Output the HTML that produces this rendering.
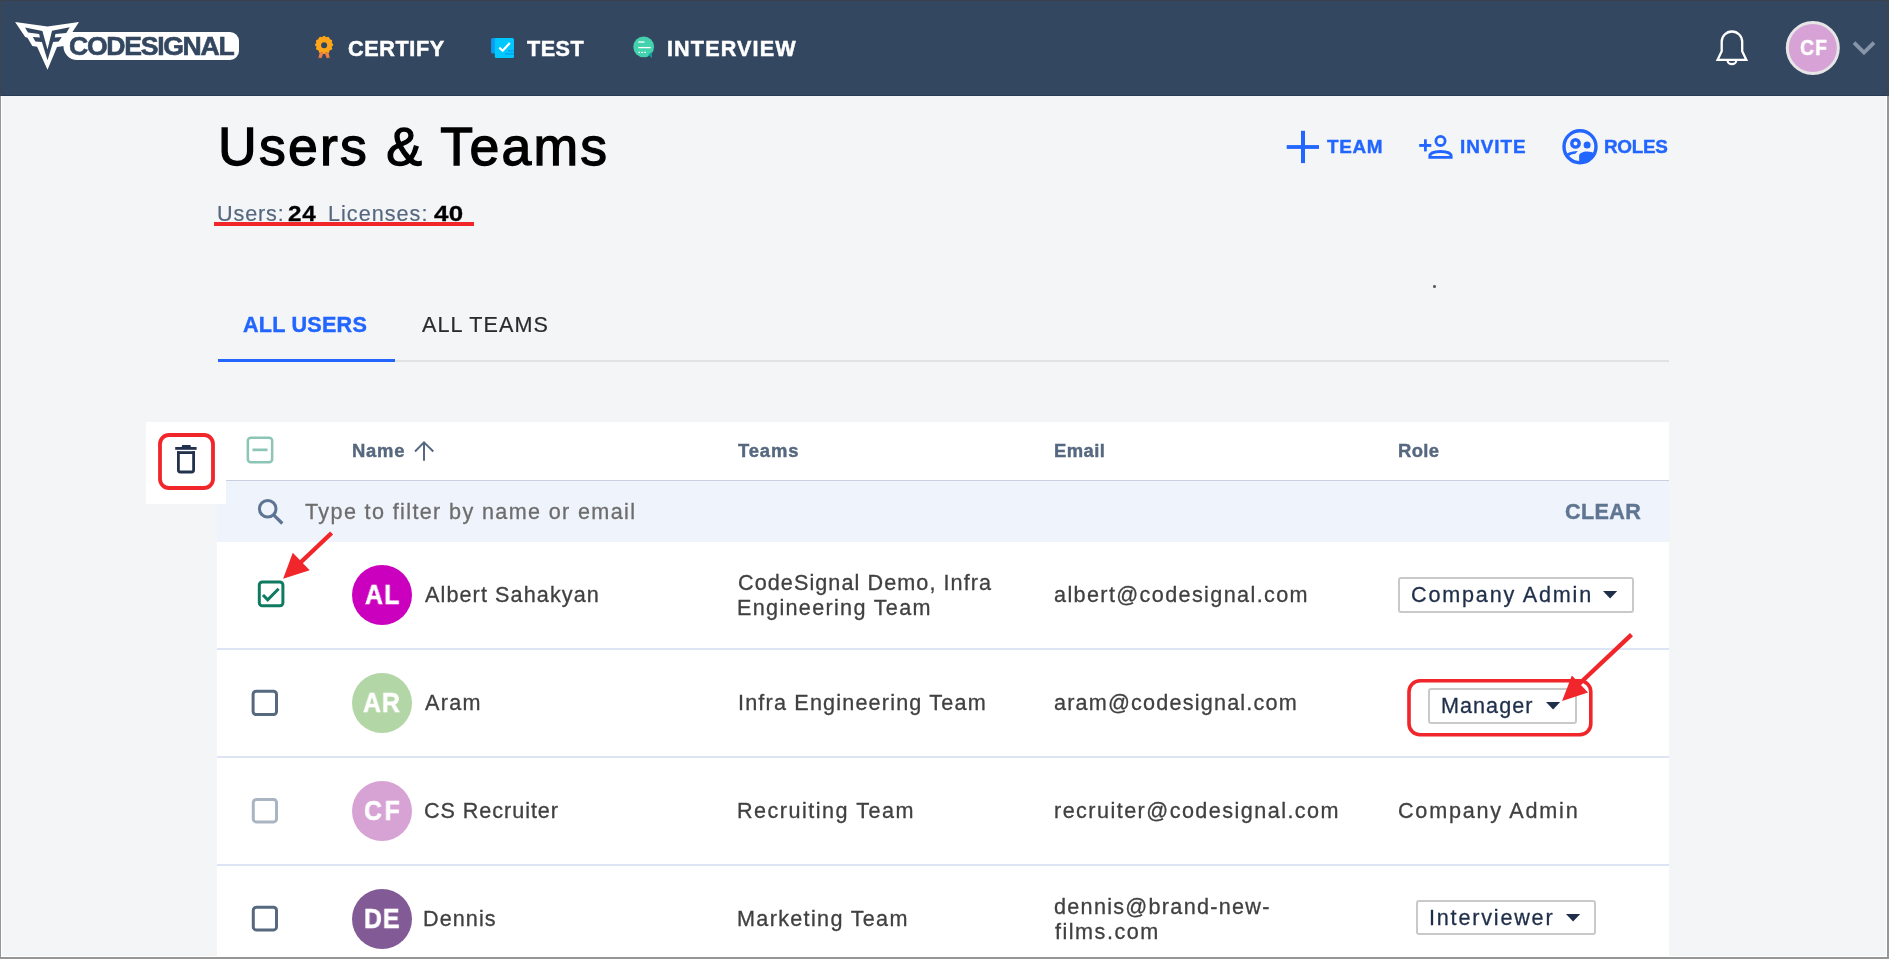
<!DOCTYPE html>
<html><head><meta charset="utf-8">
<style>
html,body{margin:0;padding:0;}
body{width:1889px;height:959px;position:relative;overflow:hidden;background:#f4f5f7;font-family:"Liberation Sans",sans-serif;}
.a{position:absolute;}
.t{position:absolute;white-space:nowrap;line-height:1;-webkit-font-smoothing:antialiased;will-change:transform;}
svg{position:absolute;overflow:visible;}
</style></head>
<body>
<div class="a" style="left:0px;top:0px;width:1889px;height:95px;background:#334760;"></div>
<div class="a" style="left:0px;top:95px;width:1889px;height:1px;background:#2a3c55;"></div>
<div class="a" style="left:0px;top:0px;width:1889px;height:1px;background:#3a424d;"></div>
<svg style="left:0;top:0" width="260" height="96" viewBox="0 0 260 96">
<path d="M68,32 L230,32 A9,9 0 0 1 239,41 L239,51 A9,9 0 0 1 230,60 L77,60 C69.5,60 63.5,54 63.5,46.5 L63.5,40 Z" fill="#fff"/>
<polygon fill="#fff" points="15.1,21.9 47.5,26.6 79,21.9 72.8,31.5 64,46 57,47 47.5,69.8 37.1,46.7 32.3,45.9 27.5,37.7 25.2,36.9"/>
<polygon fill="#334760" points="25,27.6 42.4,31 47.5,49.5 52,30.7 69.7,27.3 66.3,32.9 55.4,34 54.8,37.4 61.8,37.1 58.7,41.6 53.1,41.9 47.5,60.2 41.9,41.9 35.4,41.6 32.8,37.1 39.9,37.4 39.2,34 28,32.6"/>
</svg>
<div class="t" style="left:68.50px;top:33.00px;font-size:26.6px;font-weight:bold;color:#334760;letter-spacing:-1.289px;-webkit-text-stroke:0.6px #334760;">CODESIGNAL</div>
<svg style="left:0;top:0" width="900" height="96" viewBox="0 0 900 96">
<g fill="#ffa51a">
<circle cx="324.1" cy="44.8" r="8.1"/>
<circle cx="331.70" cy="44.80" r="1.5"/><circle cx="330.68" cy="48.60" r="1.5"/><circle cx="327.90" cy="51.38" r="1.5"/><circle cx="324.10" cy="52.40" r="1.5"/><circle cx="320.30" cy="51.38" r="1.5"/><circle cx="317.52" cy="48.60" r="1.5"/><circle cx="316.50" cy="44.80" r="1.5"/><circle cx="317.52" cy="41.00" r="1.5"/><circle cx="320.30" cy="38.22" r="1.5"/><circle cx="324.10" cy="37.20" r="1.5"/><circle cx="327.90" cy="38.22" r="1.5"/><circle cx="330.68" cy="41.00" r="1.5"/>
</g>
<circle cx="324.1" cy="45.3" r="3" fill="#334760"/>
<polygon fill="#f47f45" points="319.8,52.3 323.3,53.3 321.3,58.6 319.8,57.4 318.3,58.4" />
<polygon fill="#f47f45" points="324.9,53.3 328.4,52.3 329.9,58.4 328.4,57.4 326.9,58.6" />
<rect x="491.1" y="37.9" width="21" height="15.5" rx="1.5" fill="#0a9cf0"/>
<rect x="494.8" y="37.9" width="19.2" height="20.1" rx="1.5" fill="#00c8ff"/>
<polyline points="499.3,47.6 502.7,50.8 509.8,42.9" fill="none" stroke="#fff" stroke-width="2.2"/>
<line x1="508" y1="50.8" x2="514" y2="50.8" stroke="#0a9cf0" stroke-width="1.3"/>
<line x1="505" y1="53.9" x2="514" y2="53.9" stroke="#0a9cf0" stroke-width="1.3"/>
<circle cx="643.7" cy="46.9" r="10.4" fill="#44d1ad"/>
<polygon points="648,55 652,52 652,58" fill="#139b9a"/>
<line x1="638.3" y1="42.0" x2="644.5" y2="42.0" stroke="#fff" stroke-width="1.3"/>
<line x1="638.3" y1="47.6" x2="650.7" y2="47.6" stroke="#fff" stroke-width="1.3"/>
<line x1="638.4" y1="52.4" x2="640" y2="52.4" stroke="#fff" stroke-width="1.3"/>
<line x1="641.3" y1="52.4" x2="642.9" y2="52.4" stroke="#fff" stroke-width="1.3"/>
<line x1="644.3" y1="52.4" x2="645.9" y2="52.4" stroke="#fff" stroke-width="1.3"/>
</svg>
<div class="t" style="left:348.10px;top:38.00px;font-size:21.6px;font-weight:bold;color:#fff;letter-spacing:0.633px;-webkit-text-stroke:0.5px #fff;">CERTIFY</div>
<div class="t" style="left:526.90px;top:38.00px;font-size:21.6px;font-weight:bold;color:#fff;letter-spacing:0.467px;-webkit-text-stroke:0.5px #fff;">TEST</div>
<div class="t" style="left:666.70px;top:38.00px;font-size:21.6px;font-weight:bold;color:#fff;letter-spacing:1.125px;-webkit-text-stroke:0.5px #fff;">INTERVIEW</div>
<svg style="left:1700px;top:0" width="189" height="96" viewBox="1700 0 189 96">
<path d="M1721.7,51.3 L1721.7,41.75 A10.25,10.25 0 0 1 1742.2,41.75 L1742.2,51.3 L1746.3,59.8 L1717.6,59.8 Z" fill="none" stroke="#fff" stroke-width="2.3" stroke-linejoin="miter"/>
<path d="M1727.6,60.8 A4.3,3.3 0 0 0 1736.2,60.8" fill="none" stroke="#fff" stroke-width="2.2"/>
<circle cx="1812.8" cy="48" r="25.5" fill="#d7a3d6" stroke="#e6e6e6" stroke-width="3"/>
<polyline points="1854,42.6 1864,52.6 1874,42.6" fill="none" stroke="#8795a8" stroke-width="3.8"/>
</svg>
<div class="t" style="left:1799.70px;top:37.00px;font-size:21.6px;font-weight:bold;color:#fff;letter-spacing:1.1px;transform:scaleX(0.9);transform-origin:0 0;-webkit-text-stroke:0.5px #fff;">CF</div>
<div class="t" style="left:217.80px;top:120.00px;font-size:53.6px;font-weight:normal;color:#000;letter-spacing:2.233px;-webkit-text-stroke:1.3px #000;">Users &amp; Teams</div>
<div class="t" style="left:216.90px;top:203.00px;font-size:21.6px;font-weight:normal;color:#56687f;letter-spacing:0.88px;-webkit-text-stroke:0.2px #56687f;">Users:</div>
<div class="t" style="left:288.40px;top:203.00px;font-size:21.6px;font-weight:bold;color:#000;letter-spacing:0.8px;transform:scaleX(1.12);transform-origin:0 0;-webkit-text-stroke:0.3px #000;">24</div>
<div class="t" style="left:328.20px;top:203.00px;font-size:21.6px;font-weight:normal;color:#56687f;letter-spacing:1.025px;-webkit-text-stroke:0.2px #56687f;">Licenses:</div>
<div class="t" style="left:433.60px;top:203.00px;font-size:21.6px;font-weight:bold;color:#000;letter-spacing:0.2px;transform:scaleX(1.2);transform-origin:0 0;-webkit-text-stroke:0.3px #000;">40</div>
<div class="a" style="left:214px;top:222px;width:260px;height:4px;background:#f0262b;"></div>
<svg style="left:1280px;top:120px" width="400" height="50" viewBox="1280 120 400 50">
<rect x="1286.7" y="145.1" width="32.3" height="3.8" fill="#2266ff"/>
<rect x="1301" y="130.8" width="4" height="32.3" fill="#2266ff"/>
<rect x="1419.2" y="144" width="12.1" height="2.9" fill="#2266ff"/>
<rect x="1424" y="139.3" width="2.8" height="12.1" fill="#2266ff"/>
<circle cx="1440.5" cy="140.9" r="4.6" fill="none" stroke="#2266ff" stroke-width="2.8"/>
<path d="M1429.8,157.3 L1429.8,156.5 C1429.8,152.5 1436,151.5 1440.5,151.5 C1445,151.5 1451.2,152.5 1451.2,156.5 L1451.2,157.3 Z" fill="none" stroke="#2266ff" stroke-width="2.8"/>
<circle cx="1580" cy="146.7" r="16" fill="none" stroke="#2266ff" stroke-width="3.4"/>
<circle cx="1575.5" cy="143.4" r="3.7" fill="none" stroke="#2266ff" stroke-width="3.4"/>
<circle cx="1587.1" cy="145.1" r="3.5" fill="#2266ff"/>
<path d="M1579.1,162.5 L1579.1,156 C1579.1,153 1583,151.4 1587,151.4 C1590,151.4 1593,152.2 1594.5,153.5 C1592,159 1586,162.8 1579.1,162.5 Z" fill="#2266ff"/>
<path d="M1566.8,153.8 C1569.5,152 1573.5,151 1577.8,151 L1575.4,153.8 C1572.5,154 1570,154.8 1569,156.3 Z" fill="#2266ff"/>
</svg>
<div class="t" style="left:1327.00px;top:138.00px;font-size:18.9px;font-weight:bold;color:#2266ff;letter-spacing:0.667px;-webkit-text-stroke:0.4px #2266ff;">TEAM</div>
<div class="t" style="left:1459.80px;top:138.00px;font-size:18.9px;font-weight:bold;color:#2266ff;letter-spacing:0.96px;-webkit-text-stroke:0.4px #2266ff;">INVITE</div>
<div class="t" style="left:1603.90px;top:138.00px;font-size:18.9px;font-weight:bold;color:#2266ff;letter-spacing:-0.3px;-webkit-text-stroke:0.4px #2266ff;">ROLES</div>
<div class="t" style="left:243.20px;top:314.00px;font-size:21.6px;font-weight:bold;color:#2266ff;letter-spacing:0.225px;-webkit-text-stroke:0.4px #2266ff;">ALL USERS</div>
<div class="t" style="left:421.90px;top:314.00px;font-size:21.6px;font-weight:normal;color:#2b2b2b;letter-spacing:1.025px;-webkit-text-stroke:0.2px #2b2b2b;">ALL TEAMS</div>
<div class="a" style="left:395px;top:360px;width:1274px;height:2px;background:#e2e2e2;"></div>
<div class="a" style="left:218px;top:359px;width:177px;height:3px;background:#2266ff;"></div>
<div class="a" style="left:1433px;top:285px;width:2.6px;height:2.6px;background:#606060;border-radius:50%"></div>
<div class="a" style="left:146px;top:422px;width:1523px;height:58px;background:#fff;"></div>
<div class="a" style="left:217px;top:480px;width:1452px;height:1px;background:#c8d0e0;"></div>
<div class="a" style="left:217px;top:481px;width:1452px;height:61px;background:#eff3fb;"></div>
<div class="a" style="left:146px;top:480px;width:80px;height:24px;background:#fff;"></div>
<div class="a" style="left:217px;top:542px;width:1452px;height:414px;background:#fff;"></div>
<div class="a" style="left:217px;top:648px;width:1452px;height:2px;background:#dce4f6;"></div>
<div class="a" style="left:217px;top:756px;width:1452px;height:2px;background:#dce4f6;"></div>
<div class="a" style="left:217px;top:864px;width:1452px;height:2px;background:#dce4f6;"></div>
<svg style="left:140px;top:420px" width="100" height="100" viewBox="140 420 100 100">
<rect x="160" y="435" width="53" height="53" rx="9" fill="none" stroke="#f0262b" stroke-width="3.8"/>
<rect x="175.2" y="447" width="21.4" height="2.8" fill="#22324c"/>
<rect x="181.8" y="445" width="9" height="3" rx="1" fill="#22324c"/>
<path d="M178.4,451.3 L178.4,470 Q178.4,472 180.4,472 L191.6,472 Q193.6,472 193.6,470 L193.6,451.3" fill="none" stroke="#22324c" stroke-width="2.8"/>
<line x1="177" y1="452.6" x2="195" y2="452.6" stroke="#22324c" stroke-width="2.8"/>
</svg>
<svg style="left:240px;top:430px" width="200" height="40" viewBox="240 430 200 40">
<rect x="247.85" y="437.85" width="24.3" height="24.3" rx="3" fill="none" stroke="#8cc5b5" stroke-width="2.5"/>
<rect x="252.5" y="448.5" width="15" height="2.7" fill="#8cc5b5"/>
<line x1="424" y1="442" x2="424" y2="460.7" stroke="#56687f" stroke-width="2"/>
<polyline points="415,451.5 424,442.3 433.3,451.5" fill="none" stroke="#56687f" stroke-width="2"/>
</svg>
<div class="t" style="left:352.10px;top:442.00px;font-size:18.46px;font-weight:bold;color:#56687f;letter-spacing:0.733px;-webkit-text-stroke:0.4px #56687f;">Name</div>
<div class="t" style="left:737.90px;top:442.00px;font-size:18.46px;font-weight:bold;color:#56687f;letter-spacing:0.85px;-webkit-text-stroke:0.4px #56687f;">Teams</div>
<div class="t" style="left:1054.10px;top:442.00px;font-size:18.46px;font-weight:bold;color:#56687f;letter-spacing:0.4px;-webkit-text-stroke:0.4px #56687f;">Email</div>
<div class="t" style="left:1398.00px;top:442.00px;font-size:18.46px;font-weight:bold;color:#56687f;letter-spacing:0.333px;-webkit-text-stroke:0.4px #56687f;">Role</div>
<svg style="left:250px;top:490px" width="40" height="40" viewBox="250 490 40 40">
<circle cx="267.7" cy="508.8" r="8.3" fill="none" stroke="#5d7593" stroke-width="3"/>
<line x1="273.6" y1="514.8" x2="282.3" y2="523.5" stroke="#5d7593" stroke-width="3.2"/>
</svg>
<div class="t" style="left:305.10px;top:501.00px;font-size:21.6px;font-weight:normal;color:#6d6d6d;letter-spacing:1.36px;-webkit-text-stroke:0.3px #6d6d6d;">Type to filter by name or email</div>
<div class="t" style="left:1564.90px;top:501.00px;font-size:21.6px;font-weight:bold;color:#5f7591;letter-spacing:0.35px;-webkit-text-stroke:0.4px #5f7591;">CLEAR</div>
<div class="a" style="left:352px;top:565px;width:60px;height:60px;border-radius:50%;background:#cb00be"></div>
<div class="t" style="left:364.70px;top:581.00px;font-size:27.6px;font-weight:bold;color:#fff;letter-spacing:1.3px;transform:scaleX(0.9);transform-origin:0 0;-webkit-text-stroke:0.6px #fff;">AL</div>
<div class="t" style="left:425.20px;top:584.00px;font-size:21.6px;font-weight:normal;color:#404040;letter-spacing:1.1px;-webkit-text-stroke:0.3px #404040;">Albert Sahakyan</div>
<div class="a" style="left:352px;top:673px;width:60px;height:60px;border-radius:50%;background:#b3d6a6"></div>
<div class="t" style="left:363.20px;top:689.00px;font-size:27.6px;font-weight:bold;color:#fff;letter-spacing:1.1px;transform:scaleX(0.9);transform-origin:0 0;-webkit-text-stroke:0.6px #fff;">AR</div>
<div class="t" style="left:425.20px;top:692.00px;font-size:21.6px;font-weight:normal;color:#404040;letter-spacing:1.333px;-webkit-text-stroke:0.3px #404040;">Aram</div>
<div class="a" style="left:352px;top:781px;width:60px;height:60px;border-radius:50%;background:#d7a3d5"></div>
<div class="t" style="left:364.00px;top:797.00px;font-size:27.6px;font-weight:bold;color:#fff;letter-spacing:3.1px;transform:scaleX(0.9);transform-origin:0 0;-webkit-text-stroke:0.6px #fff;">CF</div>
<div class="t" style="left:424.20px;top:800.00px;font-size:21.6px;font-weight:normal;color:#404040;letter-spacing:0.945px;-webkit-text-stroke:0.3px #404040;">CS Recruiter</div>
<div class="a" style="left:352px;top:889px;width:60px;height:60px;border-radius:50%;background:#825a96"></div>
<div class="t" style="left:364.00px;top:905.00px;font-size:27.6px;font-weight:bold;color:#fff;letter-spacing:1.1px;transform:scaleX(0.9);transform-origin:0 0;-webkit-text-stroke:0.6px #fff;">DE</div>
<div class="t" style="left:423.20px;top:908.00px;font-size:21.6px;font-weight:normal;color:#404040;letter-spacing:1.08px;-webkit-text-stroke:0.3px #404040;">Dennis</div>
<div class="t" style="left:738.20px;top:572.00px;font-size:21.6px;font-weight:normal;color:#404040;letter-spacing:1.076px;-webkit-text-stroke:0.3px #404040;">CodeSignal Demo, Infra</div>
<div class="t" style="left:737.20px;top:597.00px;font-size:21.6px;font-weight:normal;color:#404040;letter-spacing:1.32px;-webkit-text-stroke:0.3px #404040;">Engineering Team</div>
<div class="t" style="left:1053.90px;top:584.00px;font-size:21.6px;font-weight:normal;color:#404040;letter-spacing:1.38px;-webkit-text-stroke:0.3px #404040;">albert@codesignal.com</div>
<div class="t" style="left:738.10px;top:692.00px;font-size:21.6px;font-weight:normal;color:#404040;letter-spacing:1.181px;-webkit-text-stroke:0.3px #404040;">Infra Engineering Team</div>
<div class="t" style="left:1053.50px;top:692.00px;font-size:21.6px;font-weight:normal;color:#404040;letter-spacing:1.2px;-webkit-text-stroke:0.3px #404040;">aram@codesignal.com</div>
<div class="t" style="left:736.60px;top:800.00px;font-size:21.6px;font-weight:normal;color:#404040;letter-spacing:1.486px;-webkit-text-stroke:0.3px #404040;">Recruiting Team</div>
<div class="t" style="left:1053.70px;top:800.00px;font-size:21.6px;font-weight:normal;color:#404040;letter-spacing:1.452px;-webkit-text-stroke:0.3px #404040;">recruiter@codesignal.com</div>
<div class="t" style="left:1398.40px;top:800.00px;font-size:21.6px;font-weight:normal;color:#404040;letter-spacing:1.767px;-webkit-text-stroke:0.3px #404040;">Company Admin</div>
<div class="t" style="left:736.60px;top:908.00px;font-size:21.6px;font-weight:normal;color:#404040;letter-spacing:1.323px;-webkit-text-stroke:0.3px #404040;">Marketing Team</div>
<div class="t" style="left:1053.70px;top:896.00px;font-size:21.6px;font-weight:normal;color:#404040;letter-spacing:1.287px;-webkit-text-stroke:0.3px #404040;">dennis@brand-new-</div>
<div class="t" style="left:1054.70px;top:921.00px;font-size:21.6px;font-weight:normal;color:#404040;letter-spacing:1.5px;-webkit-text-stroke:0.3px #404040;">films.com</div>
<svg style="left:240px;top:570px" width="60" height="380" viewBox="240 570 60 380">
<rect x="259.3" y="581.9" width="23.6" height="23.9" rx="3" fill="none" stroke="#0f7a62" stroke-width="3"/>
<polyline points="263,595 267.7,599.8 278.6,588.8" fill="none" stroke="#0f7a62" stroke-width="3"/>
<rect x="253.1" y="691.2" width="23.4" height="23.4" rx="3" fill="none" stroke="#56697f" stroke-width="3"/>
<rect x="253.3" y="799.5" width="23.2" height="22.4" rx="3" fill="none" stroke="#a9b5c2" stroke-width="3"/>
<rect x="253.3" y="907.3" width="23.2" height="22.6" rx="3" fill="none" stroke="#56697f" stroke-width="3"/>
</svg>
<div class="a" style="left:1398px;top:577px;width:236px;height:36px;box-sizing:border-box;border:2px solid #c9c9c9;border-radius:3px;background:#fff"></div>
<div class="t" style="left:1411.30px;top:584.00px;font-size:21.6px;font-weight:normal;color:#1f2f4a;letter-spacing:1.817px;-webkit-text-stroke:0.3px #1f2f4a;">Company Admin</div>
<svg style="left:1603.3px;top:590.9px" width="16" height="9" viewBox="0 0 16 9"><polygon points="0,0 14.2,0 7.1,7.4" fill="#1f2f4a"/></svg>
<div class="a" style="left:1428px;top:688px;width:149px;height:36px;box-sizing:border-box;border:2px solid #c9c9c9;border-radius:3px;background:#fff"></div>
<div class="t" style="left:1440.80px;top:695.00px;font-size:21.6px;font-weight:normal;color:#1f2f4a;letter-spacing:1.033px;-webkit-text-stroke:0.3px #1f2f4a;">Manager</div>
<svg style="left:1545.9px;top:701.9px" width="16" height="9" viewBox="0 0 16 9"><polygon points="0,0 14.2,0 7.1,7.4" fill="#1f2f4a"/></svg>
<div class="a" style="left:1416px;top:900px;width:180px;height:35px;box-sizing:border-box;border:2px solid #c9c9c9;border-radius:3px;background:#fff"></div>
<div class="t" style="left:1429.00px;top:907.00px;font-size:21.6px;font-weight:normal;color:#1f2f4a;letter-spacing:1.8px;-webkit-text-stroke:0.3px #1f2f4a;">Interviewer</div>
<svg style="left:1566.1px;top:914.1px" width="16" height="9" viewBox="0 0 16 9"><polygon points="0,0 14.2,0 7.1,7.4" fill="#1f2f4a"/></svg>
<svg style="left:0;top:0" width="1889" height="959" viewBox="0 0 1889 959">
<line x1="331.6" y1="533" x2="300" y2="563" stroke="#f0262b" stroke-width="4.4"/>
<polygon points="283.1,578.7 292.8,552.8 309.7,570.3" fill="#f0262b"/>
<rect x="1409" y="680.7" width="181.8" height="54" rx="11" fill="none" stroke="#f0262b" stroke-width="3.6"/>
<line x1="1631.5" y1="634.7" x2="1578" y2="685" stroke="#f0262b" stroke-width="4.4"/>
<polygon points="1562.1,700.9 1571.9,675.6 1588,692.4" fill="#f0262b"/>
</svg>
<div class="a" style="left:0px;top:0px;width:1px;height:96px;background:#3c4550;"></div>
<div class="a" style="left:0px;top:96px;width:1px;height:863px;background:#969696;"></div>
<div class="a" style="left:1px;top:96px;width:1px;height:861px;background:#fff;"></div>
<div class="a" style="left:1887px;top:0px;width:2px;height:96px;background:#3c4550;"></div>
<div class="a" style="left:1886px;top:96px;width:1px;height:861px;background:#fff;"></div>
<div class="a" style="left:1887px;top:96px;width:2px;height:863px;background:#969696;"></div>
<div class="a" style="left:1px;top:956px;width:1886px;height:1px;background:#fff;"></div>
<div class="a" style="left:0px;top:957px;width:1889px;height:2px;background:#969696;"></div>
</body></html>
